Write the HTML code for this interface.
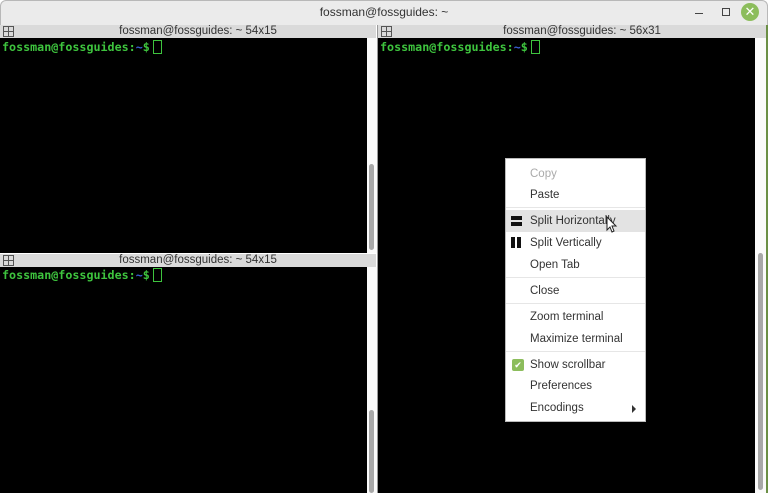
<!DOCTYPE html>
<html><head><style>
*{margin:0;padding:0;box-sizing:border-box}
body{width:768px;height:493px;overflow:hidden;background:#fff;font-family:"Liberation Sans","DejaVu Sans",sans-serif;position:relative}
.a{position:absolute}
.tb{background:#ebebeb;left:0;top:0;width:768px;height:25px;border-radius:6px 6px 0 0;border:1px solid #b8b8b8;border-bottom:none}
.title{font-size:12px;color:#333;text-align:center;width:100%;top:5px}
.hdr{background:#dadada;height:13px;font-size:11.5px;color:#333;text-align:center;line-height:13px;padding-left:20px}
.term{background:#000}
.prompt{font-family:"DejaVu Sans Mono","Liberation Mono",monospace;font-size:11.7px;font-weight:bold;color:#3ec43e;line-height:14px;white-space:pre}
.prompt b{color:#3a5fd0}
.cur{display:inline-block;width:9px;height:14px;border:1px solid #3ec43e;vertical-align:top;margin-left:3px}
.sb{background:#fafafa}
.th{background:#a8a8a8;border-radius:3px}
.gi{width:11px;height:11px;border:1px solid #555;background:linear-gradient(#555,#555) 4px 0/1px 100% no-repeat,linear-gradient(#555,#555) 0 4px/100% 1px no-repeat}
.menu{left:505px;top:158px;width:141px;height:264px;background:#fff;border:1px solid #bbb;box-shadow:0 1px 3px rgba(0,0,0,.3);font-size:11.5px;color:#333}
.mi{position:absolute;left:24px}
.sep{position:absolute;left:0;width:139px;height:1px;background:#e6e6e6}
</style></head><body>
<div class="a tb"></div>
<div class="a title">fossman@fossguides: ~</div>
<div class="a" style="left:695px;top:13px;width:8px;height:1px;background:#444"></div>
<div class="a" style="left:722px;top:8px;width:8px;height:8px;border:1px solid #444"></div>
<div class="a" style="left:741px;top:3px;width:18px;height:18px;border-radius:50%;background:#8cbd5c;color:#fff;font-size:13px;text-align:center;line-height:18px">✕</div>

<div class="a hdr" style="left:0;top:25px;width:376px">fossman@fossguides: ~ 54x15</div>
<div class="a gi" style="left:3px;top:26px"></div>
<div class="a term" style="left:0;top:38px;width:367px;height:215px"></div>
<div class="a prompt" style="left:2px;top:40px">fossman@fossguides:<b>~</b>$<span class="cur"></span></div>
<div class="a sb" style="left:367px;top:38px;width:10px;height:215px"></div>
<div class="a th" style="left:369px;top:164px;width:5px;height:86px"></div>

<div class="a hdr" style="left:0;top:254px;width:376px">fossman@fossguides: ~ 54x15</div>
<div class="a gi" style="left:3px;top:255px"></div>
<div class="a term" style="left:0;top:267px;width:367px;height:226px"></div>
<div class="a prompt" style="left:2px;top:268px">fossman@fossguides:<b>~</b>$<span class="cur"></span></div>
<div class="a sb" style="left:367px;top:267px;width:10px;height:226px"></div>
<div class="a th" style="left:369px;top:410px;width:5px;height:83px"></div>

<div class="a" style="left:377px;top:25px;width:1px;height:468px;background:#999"></div>
<div class="a hdr" style="left:378px;top:25px;width:388px">fossman@fossguides: ~ 56x31</div>
<div class="a gi" style="left:381px;top:26px"></div>
<div class="a term" style="left:378px;top:38px;width:377px;height:455px"></div>
<div class="a prompt" style="left:380px;top:40px">fossman@fossguides:<b>~</b>$<span class="cur"></span></div>
<div class="a sb" style="left:755px;top:38px;width:11px;height:455px"></div>
<div class="a th" style="left:758px;top:253px;width:5px;height:237px"></div>
<div class="a" style="left:766px;top:25px;width:2px;height:468px;background:#6b8f45"></div>

<div class="a menu">
<div class="mi" style="top:9px;color:#aaa">Copy</div>
<div class="mi" style="top:30px">Paste</div>
<div class="sep" style="top:48px"></div>
<div class="a" style="left:0;top:51px;width:139px;height:22px;background:#e3e3e3"></div>
<div class="a" style="left:5px;top:57px;width:11px;height:4px;background:#111"></div>
<div class="a" style="left:5px;top:63px;width:11px;height:4px;background:#111"></div>
<div class="mi" style="top:56px">Split Horizontally</div>
<div class="a" style="left:5px;top:78px;width:4px;height:11px;background:#111"></div>
<div class="a" style="left:11px;top:78px;width:4px;height:11px;background:#111"></div>
<div class="mi" style="top:78px">Split Vertically</div>
<div class="mi" style="top:100px">Open Tab</div>
<div class="sep" style="top:118px"></div>
<div class="mi" style="top:126px">Close</div>
<div class="sep" style="top:144px"></div>
<div class="mi" style="top:152px">Zoom terminal</div>
<div class="mi" style="top:174px">Maximize terminal</div>
<div class="sep" style="top:192px"></div>
<div class="a" style="left:6px;top:200px;width:12px;height:12px;background:#8cbd5c;border-radius:2px;color:#fff;font-size:9px;text-align:center;line-height:12px">✔</div>
<div class="mi" style="top:200px">Show scrollbar</div>
<div class="mi" style="top:221px">Preferences</div>
<div class="mi" style="top:243px">Encodings</div>
<div class="a" style="left:126px;top:246px;width:0;height:0;border-left:4px solid #333;border-top:4px solid transparent;border-bottom:4px solid transparent"></div>
</div>
<svg class="a" style="left:606px;top:216px" width="12" height="18" viewBox="0 0 12 18"><path d="M1 1 L1 14 L4 11 L6 16 L8 15 L6 10 L10 10 Z" fill="#fff" stroke="#222" stroke-width="1"/></svg>
</body></html>
